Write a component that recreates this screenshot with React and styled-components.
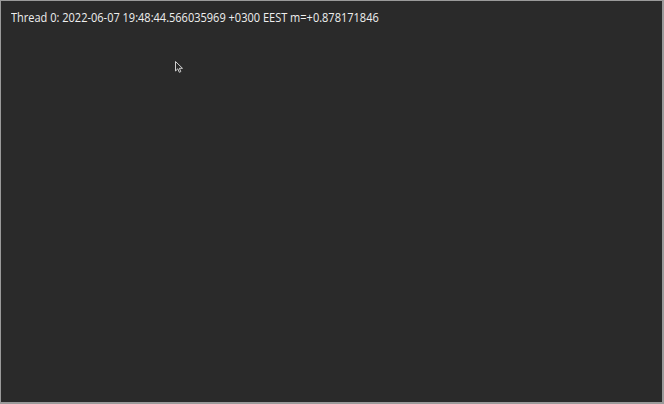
import React from "react";
import styled, { createGlobalStyle } from "styled-components";

const Global = createGlobalStyle`
  html, body { margin: 0; padding: 0; width: 664px; height: 404px; overflow: hidden; background: #2b2b2b; }
  #root { width: 664px; height: 404px; }
`;

const Window = styled.div`
  box-sizing: border-box;
  width: 664px;
  height: 404px;
  background: #2a2a2a;
  border: 1px solid #9a9a9a;
  border-right-width: 2px;
  border-bottom-width: 2px;
  padding: 8px 10px;
  position: relative;
  font-family: "Open Sans", "Noto Sans", sans-serif;
`;

const Line = styled.div`
  color: #efefef;
  font-size: 13px;
  line-height: 16px;
  white-space: nowrap;
  transform: scaleX(0.847);
  transform-origin: left center;
`;

const Cursor = styled.svg`
  position: absolute;
  left: 174px;
  top: 60px;
`;

export default function App() {
  return (
    <>
      <Global />
      <Window>
        <Line>Thread 0: 2022-06-07 19:48:44.566035969 +0300 EEST m=+0.878171846</Line>
        <Cursor width="9" height="13" viewBox="0 0 9 13">
          <path d="M0.5 0.5 L0.5 10 L2.8 7.8 L4.3 11.3 L5.8 10.6 L4.4 7.3 L7.5 7.3 Z" fill="#2a2a2a" stroke="#cfcfcf" strokeWidth="1" />
        </Cursor>
      </Window>
    </>
  );
}
